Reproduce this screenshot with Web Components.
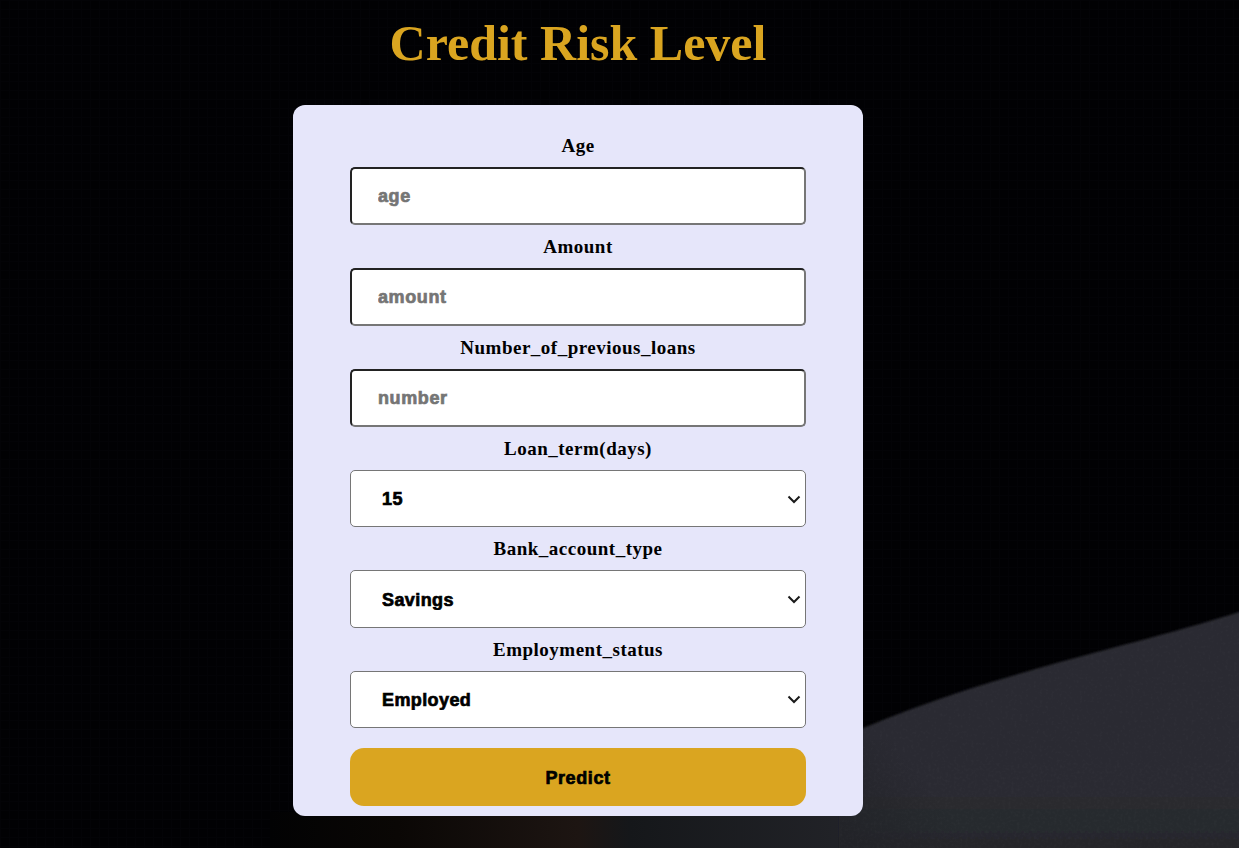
<!DOCTYPE html>
<html>
<head>
<meta charset="utf-8">
<title>Credit Risk Level</title>
<style>
  html, body { margin: 0; height: 100%; background: #000; overflow: hidden; }
</style>
</head>
<body>
<risk-page>
  <risk-form>
    <risk-field label="Age" placeholder="age"></risk-field>
    <risk-field label="Amount" placeholder="amount"></risk-field>
    <risk-field label="Number_of_previous_loans" placeholder="number"></risk-field>
    <risk-select label="Loan_term(days)" options="15,30,60"></risk-select>
    <risk-select label="Bank_account_type" options="Savings,Current"></risk-select>
    <risk-select label="Employment_status" options="Employed,Unemployed"></risk-select>
  </risk-form>
</risk-page>

<script>
const labelCss = `
    label {
        display: block;
        text-align: center;
        font: bold 19px/22px "Liberation Serif", serif;
        letter-spacing: 0.5px;
        color: #000;
        margin-bottom: 10px;
    }
`;

class RiskPage extends HTMLElement {
    constructor() {
        super();
        const shadow = this.attachShadow({ mode: 'open' });
        const clothPath = 'M1260 605 C1180 632 1100 650 1039 668 C980 685 920 703 840 738 L840 870 L1260 870 Z';
        shadow.innerHTML = `
            <style>
                :host {
                    display: block;
                    position: relative;
                    width: 1239px;
                    height: 848px;
                    overflow: hidden;
                    background: #010103;
                }
                svg { position: absolute; inset: 0; }
                .content {
                    position: relative;
                    width: 570px;
                    margin-left: 293px;
                    padding-top: 16px;
                }
                h1 {
                    margin: 0 0 34px;
                    text-align: center;
                    font: bold 50px/55px "Liberation Serif", serif;
                    color: #daa520;
                }
            </style>
            <svg width="1239" height="848" viewBox="0 0 1239 848" aria-hidden="true">
                <defs>
                    <filter id="soft"><feGaussianBlur stdDeviation="1"/></filter>
                    <filter id="grain" x="0" y="0" width="100%" height="100%">
                        <feTurbulence type="fractalNoise" baseFrequency="0.35" numOctaves="2" seed="4"/>
                        <feColorMatrix values="0 0 0 0 1  0 0 0 0 1  0 0 0 0 1  0 0 0 0.6 -0.25"/>
                    </filter>
                    <clipPath id="clothClip"><path d="${clothPath}"/></clipPath>
                    <linearGradient id="cloth" x1="0" y1="780" x2="0" y2="848" gradientUnits="userSpaceOnUse">
                        <stop offset="0" stop-color="#2a2b31"/>
                        <stop offset="1" stop-color="#27282c"/>
                    </linearGradient>
                    <linearGradient id="strip" x1="270" y1="0" x2="850" y2="0" gradientUnits="userSpaceOnUse">
                        <stop offset="0" stop-color="#020203"/>
                        <stop offset="0.22" stop-color="#0a0705"/>
                        <stop offset="0.53" stop-color="#1d1512"/>
                        <stop offset="0.62" stop-color="#15171a"/>
                        <stop offset="1" stop-color="#222328"/>
                    </linearGradient>
                    <linearGradient id="fade" x1="850" y1="848" x2="930" y2="790" gradientUnits="userSpaceOnUse">
                        <stop offset="0" stop-color="#222328"/>
                        <stop offset="1" stop-color="#222328" stop-opacity="0"/>
                    </linearGradient>
                    <pattern id="weave" width="9" height="9" patternUnits="userSpaceOnUse">
                        <path d="M0 .5H9M.5 0V9" stroke="#030306" stroke-width="1"/>
                    </pattern>
                </defs>
                <rect width="1239" height="848" fill="url(#weave)"/>
                <rect x="270" y="812" width="580" height="36" fill="url(#strip)"/>
                <path d="${clothPath}" fill="url(#cloth)" filter="url(#soft)"/>
                <rect x="840" y="740" width="200" height="108" fill="url(#fade)"/>
                <g clip-path="url(#clothClip)">
                    <rect x="840" y="600" width="399" height="248" filter="url(#grain)" opacity="0.08"/>
                </g>
            </svg>
            <div class="content">
                <h1>Credit Risk Level</h1>
                <slot></slot>
            </div>
        `;
    }
}
customElements.define('risk-page', RiskPage);

class RiskForm extends HTMLElement {
    constructor() {
        super();
        const shadow = this.attachShadow({ mode: 'open' });
        shadow.innerHTML = `
            <style>
                :host {
                    display: block;
                    position: relative;
                    box-sizing: border-box;
                    height: 711px;
                    padding: 30px 57px 10px;
                    background: #e6e6fa;
                    border-radius: 12px;
                }
                .fields {
                    display: flex;
                    flex-direction: column;
                    gap: 11px;
                }
                button {
                    display: block;
                    width: 100%;
                    height: 58px;
                    margin-top: 19.8px;
                    padding: 4px 0 0;
                    border: 0;
                    border-radius: 14px;
                    background: #daa520;
                    color: #000;
                    font: bold 18px "Liberation Sans", sans-serif;
                    -webkit-text-stroke: 0.7px #000;
                    letter-spacing: 0.6px;
                }
            </style>
            <div class="fields"><slot></slot></div>
            <button type="button">Predict</button>
        `;
    }
}
customElements.define('risk-form', RiskForm);

class RiskField extends HTMLElement {
    constructor() {
        super();
        const shadow = this.attachShadow({ mode: 'open' });
        shadow.innerHTML = `
            <style>
                :host { display: block; }
                ${labelCss}
                input {
                    display: block;
                    box-sizing: border-box;
                    width: 100%;
                    height: 58px;
                    padding: 1px 26px 0;
                    border-width: 2px;
                    border-style: solid;
                    border-color: #222 #767676 #767676 #222;
                    border-radius: 5px;
                    background: #fff;
                    font: bold 18px "Liberation Sans", sans-serif;
                    -webkit-text-stroke: 0.7px #757575;
                    letter-spacing: 0.6px;
                }
                input::placeholder { color: #757575; opacity: 1; }
            </style>
            <label>${this.getAttribute('label')}</label>
            <input type="text" placeholder="${this.getAttribute('placeholder')}">
        `;
    }
}
customElements.define('risk-field', RiskField);

class RiskSelect extends HTMLElement {
    constructor() {
        super();
        const shadow = this.attachShadow({ mode: 'open' });
        const options = this.getAttribute('options').split(',')
            .map(o => `<option>${o}</option>`).join('');
        shadow.innerHTML = `
            <style>
                :host { display: block; }
                ${labelCss}
                .box { position: relative; }
                select {
                    display: block;
                    box-sizing: border-box;
                    width: 100%;
                    height: 57.4px;
                    padding: 1px 27px 0 31px;
                    appearance: none;
                    border: 1px solid #767676;
                    border-radius: 5px;
                    background: #fff;
                    color: #000;
                    font: bold 18px "Liberation Sans", sans-serif;
                    -webkit-text-stroke: 0.7px #000;
                    letter-spacing: 0.4px;
                }
                /* drawn over the select, the native arrow is too small here */
                svg {
                    position: absolute;
                    right: 5px;
                    top: 50%;
                    margin-top: -4px;
                    pointer-events: none;
                }
            </style>
            <label>${this.getAttribute('label')}</label>
            <div class="box">
                <select>${options}</select>
                <svg width="14" height="9" viewBox="0 0 14 9" fill="none" aria-hidden="true">
                    <path d="M1.5 1.5L7 7l5.5-5.5" stroke="#1a1a1a" stroke-width="2"/>
                </svg>
            </div>
        `;
    }
}
customElements.define('risk-select', RiskSelect);
</script>
</body>
</html>
